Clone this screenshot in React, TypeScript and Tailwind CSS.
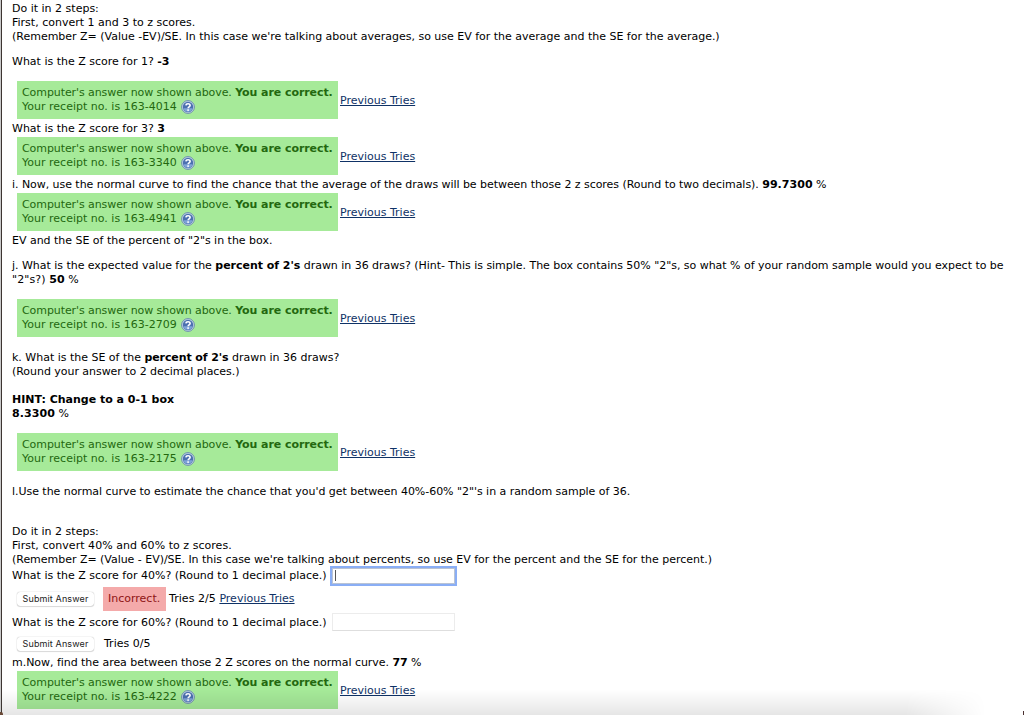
import type { ReactNode } from "react";

function Line({ className = "", children }: { className?: string; children: ReactNode }) {
  return (
    <div className={`flex h-[14px] items-center pt-[2px] pl-[12px] leading-[14px] whitespace-pre ${className}`}>
      <span>{children}</span>
    </div>
  );
}

function HelpIcon() {
  return (
    <svg width="14" height="14" viewBox="0 0 14 14" className="ml-[4px] shrink-0">
      <circle cx="7" cy="7" r="6.4" fill="#c4d9e6" stroke="#6484aa" strokeWidth="0.9" />
      <circle cx="7" cy="7" r="5.2" fill="#4c70b0" />
      <path d="M2.4 8.2A4.8 4.8 0 0 0 11.6 8.2Z" fill="#7fa3d8" />
      <path d="M4.9 5.4C5.1 3.1 9.1 3.1 9.1 5.4C9.1 6.8 7.1 6.9 7.1 8.3" fill="none" stroke="#fff" strokeWidth="1.6" />
      <rect x="6.3" y="9.3" width="1.6" height="1.6" fill="#fff" />
    </svg>
  );
}

function PreviousTries() {
  return (
    <a href="#" className="tracking-[0px] text-[#0f3266] underline decoration-1 underline-offset-[1px]">
      Previous Tries
    </a>
  );
}

function Correct({ receipt, className = "" }: { receipt: string; className?: string }) {
  return (
    <div className={`flex h-[38px] items-center pl-[17px] whitespace-pre ${className}`}>
      <div className="h-[38px] w-[320.5px] bg-[#a6ea99] pt-[5px] pl-[5px] leading-[14px] text-[#23680f]">
        <div className="h-[14px]">
          <span className="tracking-[-0.08px]">Computer's answer now shown above. </span>
          <b className="tracking-[-0.07px]">You are correct.</b>
        </div>
        <div className="flex h-[14px] items-center">
          <span className="tracking-[0.01px]">Your receipt no. is {receipt}</span>
          <HelpIcon />
        </div>
      </div>
      <div className="ml-[2.5px] pt-[2px] leading-[14px]">
        <PreviousTries />
      </div>
    </div>
  );
}

function SubmitButton() {
  return (
    <button className="ml-[17px] flex h-[14px] w-[77px] items-center justify-center rounded-[3px] bg-white font-[Inter,sans-serif] text-[9px] tracking-[0.12px] whitespace-nowrap text-[#222] shadow-[0_0_1px_rgba(0,0,0,0.4),0_1px_1px_rgba(0,0,0,0.12)]">
      Submit Answer
    </button>
  );
}

export default function App() {
  return (
    <main className="relative h-[715px] w-[1024px] overflow-hidden bg-white pt-px font-['DejaVu_Sans',Verdana,sans-serif] text-[11px] text-black">
      <Line>Do it in 2 steps:</Line>
      <Line>First, convert 1 and 3 to z scores.</Line>
      <Line className="tracking-[-0.01px]">(Remember Z= (Value -EV)/SE. In this case we're talking about averages, so use EV for the average and the SE for the average.)</Line>
      <Line className="mt-[11px]">What is the Z score for 1? <b>-3</b></Line>
      <Correct className="mt-[13px]" receipt="163-4014" />
      <Line className="mt-[2px]">What is the Z score for 3? <b>3</b></Line>
      <Correct className="mt-[2px]" receipt="163-3340" />
      <Line className="mt-[2px] tracking-[-0.05px]">i. Now, use the normal curve to find the chance that the average of the draws will be between those 2 z scores (Round to two decimals). <b className="tracking-[0.05px]">99.7300</b> %</Line>
      <Correct className="mt-[2px]" receipt="163-4941" />
      <Line className="mt-[2px] tracking-[-0.02px]">EV and the SE of the percent of "2"s in the box.</Line>
      <Line className="mt-[11px] tracking-[-0.03px]">j. What is the expected value for the <b>percent of 2's</b> drawn in 36 draws? (Hint- This is simple. The box contains 50% "2"s, so what % of your random sample would you expect to be</Line>
      <Line className="tracking-[0.1px]">"2"s?) <b>50</b> %</Line>
      <Correct className="mt-[13px]" receipt="163-2709" />
      <Line className="mt-[13px] tracking-[-0.01px]">k. What is the SE of the <b className="tracking-[-0.1px]">percent of 2's</b> drawn in 36 draws?</Line>
      <Line className="tracking-[-0.04px]">(Round your answer to 2 decimal places.)</Line>
      <Line className="mt-[14px]"><b>HINT: Change to a 0-1 box</b></Line>
      <Line><b className="tracking-[0.1px]">8.3300</b> %</Line>
      <Correct className="mt-[13px]" receipt="163-2175" />
      <Line className="mt-[13px] tracking-[-0.04px]">l.Use the normal curve to estimate the chance that you'd get between 40%-60% "2"'s in a random sample of 36.</Line>
      <Line className="mt-[26px]">Do it in 2 steps:</Line>
      <Line className="tracking-[0.04px]">First, convert 40% and 60% to z scores.</Line>
      <Line className="tracking-[-0.03px]">(Remember Z= (Value - EV)/SE. In this case we're talking about percents, so use EV for the percent and the SE for the percent.)</Line>
      <div className="flex h-[19px] items-center pl-[12px] whitespace-pre">
        <span className="w-[320px] pt-px">What is the Z score for 40%? (Round to 1 decimal place.)</span>
        <div className="flex h-[16px] w-[123px] items-center border border-[#b9c3d4] bg-white pl-[2px] shadow-[0_0_0_2px_#8aaef5]">
          <i className="h-[11px] w-px bg-[#555]" />
        </div>
      </div>
      <div className="mt-[2px] flex h-[24px] items-center whitespace-pre">
        <SubmitButton />
        <span className="ml-[9px] flex h-[24px] w-[63px] items-center bg-[#f4aaaa] pt-px pl-[5px] text-[#8e1414]">Incorrect.</span>
        <span className="ml-[3px] pt-px tracking-[0.05px]">Tries 2/5 <PreviousTries /></span>
      </div>
      <div className="mt-[2px] flex h-[18px] items-center pl-[12px] whitespace-pre">
        <span className="w-[320px] pt-[2px]">What is the Z score for 60%? (Round to 1 decimal place.)</span>
        <div className="h-[18px] w-[123px] border border-[#ececec] border-b-[#dedede] bg-white" />
      </div>
      <div className="mt-[4px] flex h-[17px] items-center whitespace-pre">
        <SubmitButton />
        <span className="ml-[10px] pt-px">Tries 0/5</span>
      </div>
      <Line className="mt-[3px] tracking-[-0.04px]">m.Now, find the area between those 2 Z scores on the normal curve. <b>77</b> %</Line>
      <Correct className="mt-[2px]" receipt="163-4222" />
      <div className="absolute top-0 left-0 h-full w-px bg-[#c9c9c9]" />
      <div className="absolute top-0 left-px h-full w-px bg-[#3c3532]" />
      <div className="pointer-events-none absolute bottom-0 left-[2px] h-[25px] w-[1004px] bg-linear-to-b from-black/0 to-black/10 mask-r-from-90% mask-r-to-98%" />
      <div className="absolute bottom-0 left-0 h-[3px] w-[3px] rounded-tr-[2px] bg-[#6b4a38]" />
      <div className="absolute right-0 bottom-0 h-[4px] w-px bg-[#4a3030]" />
    </main>
  );
}
